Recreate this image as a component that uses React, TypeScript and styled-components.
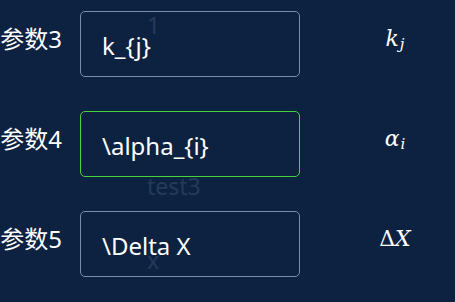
import React from 'react';
import styled, { createGlobalStyle } from 'styled-components';

const GlobalStyle = createGlobalStyle`
  html, body {
    margin: 0;
    padding: 0;
    background: #0d2240;
    overflow: hidden;
  }
  body {
    font-family: "Noto Sans", "Noto Sans CJK SC", sans-serif;
  }
`;

interface Param {
    label: string;
    value: string;
    ghost: string;
    ghostTop: number;
    active?: boolean;
    result: React.ReactNode;
}

const Page = styled.div`
  width: 455px;
  height: 302px;
  padding-top: 11px;
  box-sizing: border-box;
  display: flex;
  flex-direction: column;
`;

const Row = styled.div`
  position: relative;
  flex-shrink: 0;
  height: 100px;
  display: flex;
  align-items: flex-start;
`;

const Label = styled.div`
  width: 64px;
  margin-left: -2px;
  height: 66px;
  line-height: 56px;
  text-align: right;
  color: #ffffff;
  font-family: "Noto Sans", "Noto Sans CJK SC", sans-serif;
  font-size: 24px;
  white-space: nowrap;
`;

const Field = styled.input<{ $active?: boolean }>`
  margin-left: 18px;
  width: 220px;
  height: 66px;
  box-sizing: border-box;
  padding: 2px 0 0 21px;
  border: 1px solid ${p => (p.$active ? '#45d43c' : '#7c8daa')};
  border-radius: 5px;
  background: transparent;
  color: #ffffff;
  font-family: "Noto Sans", "Noto Sans CJK SC", sans-serif;
  font-size: 24px;
  outline: none;
`;

const Ghost = styled.span<{ $top: number }>`
  position: absolute;
  left: 147px;
  top: ${p => p.$top}px;
  color: #27395a;
  font-size: 23px;
  line-height: 1;
  pointer-events: none;
`;

const Result = styled.div`
  width: 110px;
  margin-left: 40px;
  height: 66px;
  display: flex;
  align-items: center;
  justify-content: center;
  padding-bottom: 10px;
  box-sizing: border-box;
  color: #ffffff;
  font-family: "DejaVu Serif", "Liberation Serif", serif;
  font-size: 22px;
  line-height: 1;
`;

const Var = styled.span`
  font-style: italic;
`;

const Sub = styled.span`
  position: relative;
  top: 5px;
  font-size: 15px;
  font-style: italic;
  margin-left: 1px;
`;

const params: Param[] = [
    {
        label: '参数3',
        value: 'k_{j}',
        ghost: '1',
        ghostTop: 3,
        result: <><Var>k</Var><Sub>j</Sub></>,
    },
    {
        label: '参数4',
        value: '\\alpha_{i}',
        ghost: 'test3',
        ghostTop: 64,
        active: true,
        result: <><Var>α</Var><Sub>i</Sub></>,
    },
    {
        label: '参数5',
        value: '\\Delta X',
        ghost: 'x',
        ghostTop: 38,
        result: <>Δ<Var>X</Var></>,
    },
];

const App: React.FC = () => {
    return (
        <>
            <GlobalStyle />
            <Page>
                {params.map(p => (
                    <Row key={p.label}>
                        <Label>{p.label}</Label>
                        <Field $active={p.active} defaultValue={p.value} readOnly />
                        <Ghost $top={p.ghostTop}>{p.ghost}</Ghost>
                        <Result>{p.result}</Result>
                    </Row>
                ))}
            </Page>
        </>
    );
};

export default App;
